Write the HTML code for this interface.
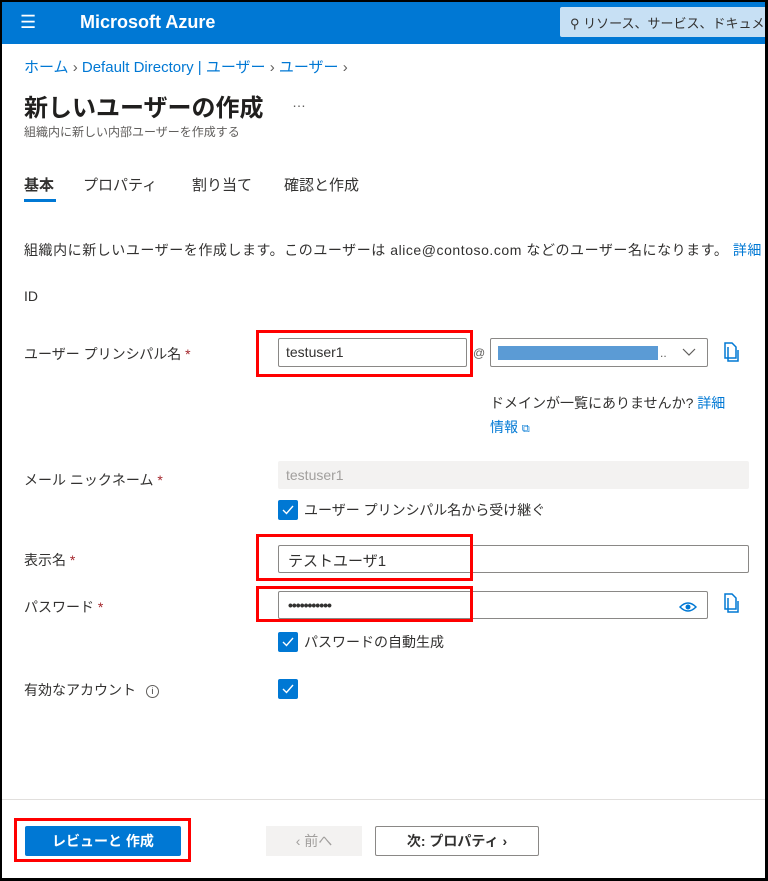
<!DOCTYPE html>
<html><head><meta charset="utf-8"><style>
*{margin:0;padding:0;box-sizing:border-box}
html,body{width:768px;height:881px;overflow:hidden;background:#000}
#p{position:absolute;left:2px;top:2px;width:763px;height:876px;background:#fff;overflow:hidden;font-family:"Liberation Sans","Noto Sans CJK JP",sans-serif;color:#323130}
.a{position:absolute;white-space:nowrap}
.in{position:absolute;border:1px solid #8a8886;border-radius:2px;background:#fff}
.red{position:absolute;border:3px solid #f00}
.cb{position:absolute;width:20px;height:20px;background:#0078d4;border-radius:2px}
.lbl{font-size:14px;color:#323130}
.st{color:#a4262c}
.lk{color:#0078d4}
</style></head><body><div id="p">
<div class="a" style="left:-2px;top:-2px;width:770px;height:44px;background:#0078d4"></div>
<div class="a" style="left:18px;top:10px;color:#fff;font-size:18px">☰</div>
<div class="a" style="left:78px;top:10px;color:#fff;font-size:18px;font-weight:bold">Microsoft Azure</div>
<div class="a" style="left:558px;top:5px;width:210px;height:30px;background:#c7e0f4;border-radius:2px"></div>
<div class="a" style="left:568px;top:11px;font-size:13px;color:#323130">⚲ リソース、サービス、ドキュメント</div>
<div class="a lk" style="left:22px;top:54px;font-size:15px">ホーム <span style="color:#605e5c">›</span> Default Directory | ユーザー <span style="color:#605e5c">›</span> ユーザー <span style="color:#605e5c">›</span></div>
<div class="a" style="left:22px;top:86px;font-size:24px;font-weight:bold;color:#201f1e">新しいユーザーの作成</div>
<div class="a" style="left:290px;top:92px;font-size:14px;color:#605e5c">…</div>
<div class="a" style="left:22px;top:121px;font-size:12px;color:#605e5c">組織内に新しい内部ユーザーを作成する</div>
<div class="a" style="left:22px;top:172px;font-size:15px;font-weight:bold">基本</div>
<div class="a" style="left:81px;top:172px;font-size:15px">プロパティ</div>
<div class="a" style="left:190px;top:172px;font-size:15px">割り当て</div>
<div class="a" style="left:282px;top:172px;font-size:15px">確認と作成</div>
<div class="a" style="left:22px;top:197px;width:32px;height:3px;background:#0078d4"></div>
<div class="a" style="left:22px;top:238px;font-size:14px;letter-spacing:0.55px">組織内に新しいユーザーを作成します。このユーザーは alice@contoso.com などのユーザー名になります。 <span class="lk">詳細</span></div>
<div class="a" style="left:22px;top:286px;font-size:14px">ID</div>
<div class="a lbl" style="left:22px;top:342px">ユーザー プリンシパル名 <span class="st">*</span></div>
<div class="in" style="left:276px;top:336px;width:189px;height:29px"></div>
<div class="a" style="left:284px;top:342px;font-size:14px">testuser1</div>
<div class="red" style="left:254px;top:328px;width:217px;height:47px"></div>
<div class="a" style="left:471px;top:344px;font-size:12px;color:#605e5c">@</div>
<div class="in" style="left:488px;top:336px;width:218px;height:29px"></div>
<div class="a" style="left:496px;top:344px;width:160px;height:14px;background:#5b9bd5"></div>
<div class="a" style="left:658px;top:344px;font-size:12px;color:#605e5c">..</div>
<svg class="a" style="left:680px;top:345px" width="14" height="10"><path d="M1 2l6 6 6-6" fill="none" stroke="#605e5c" stroke-width="1.2"/></svg>
<svg class="a" style="left:720px;top:340px" width="18" height="22"><path d="M3 1h7l4 4v11H3z M6 5v14h10V8" fill="none" stroke="#0078d4" stroke-width="1.5"/></svg>
<div class="a" style="left:488px;top:391px;font-size:14px">ドメインが一覧にありませんか? <span class="lk">詳細</span></div>
<div class="a lk" style="left:488px;top:415px;font-size:14px">情報 <span style="font-size:11px">⧉</span></div>
<div class="a lbl" style="left:22px;top:468px">メール ニックネーム <span class="st">*</span></div>
<div class="a" style="left:276px;top:459px;width:471px;height:28px;background:#f3f2f1;border-radius:2px"></div>
<div class="a" style="left:284px;top:465px;font-size:14px;color:#a19f9d">testuser1</div>
<div class="cb" style="left:276px;top:498px"></div>
<svg class="a" style="left:279px;top:501px" width="14" height="14"><path d="M2 7l3.5 3.5L12 3" fill="none" stroke="#fff" stroke-width="1.4"/></svg>
<div class="a" style="left:302px;top:498px;font-size:14px">ユーザー プリンシパル名から受け継ぐ</div>
<div class="a lbl" style="left:22px;top:548px">表示名 <span class="st">*</span></div>
<div class="in" style="left:276px;top:543px;width:471px;height:28px"></div>
<div class="a" style="left:286px;top:548px;font-size:15px">テストユーザ1</div>
<div class="red" style="left:254px;top:532px;width:217px;height:47px"></div>
<div class="a lbl" style="left:22px;top:595px">パスワード <span class="st">*</span></div>
<div class="in" style="left:276px;top:589px;width:430px;height:28px"></div>
<div class="a" style="left:286px;top:595px;font-size:14px;font-weight:bold;letter-spacing:-1px">•••••••••••</div>
<svg class="a" style="left:677px;top:598px" width="18" height="14"><path d="M1 7Q9 -1 17 7Q9 15 1 7z" fill="none" stroke="#0078d4" stroke-width="1.5"/><circle cx="9" cy="7" r="2.5" fill="#0078d4"/></svg>
<svg class="a" style="left:720px;top:591px" width="18" height="22"><path d="M3 1h7l4 4v11H3z M6 5v14h10V8" fill="none" stroke="#0078d4" stroke-width="1.5"/></svg>
<div class="red" style="left:254px;top:584px;width:217px;height:36px"></div>
<div class="cb" style="left:276px;top:630px"></div>
<svg class="a" style="left:279px;top:633px" width="14" height="14"><path d="M2 7l3.5 3.5L12 3" fill="none" stroke="#fff" stroke-width="1.4"/></svg>
<div class="a" style="left:302px;top:630px;font-size:14px">パスワードの自動生成</div>
<div class="a lbl" style="left:22px;top:678px">有効なアカウント <span style="display:inline-block;width:13px;height:13px;border:1px solid #605e5c;border-radius:50%;font-size:9px;text-align:center;line-height:11px;margin-left:6px;vertical-align:middle">i</span></div>
<div class="cb" style="left:276px;top:677px"></div>
<svg class="a" style="left:279px;top:680px" width="14" height="14"><path d="M2 7l3.5 3.5L12 3" fill="none" stroke="#fff" stroke-width="1.4"/></svg>
<div class="a" style="left:0;top:797px;width:763px;height:1px;background:#e1dfdd"></div>
<div class="a" style="left:23px;top:824px;width:156px;height:30px;background:#0078d4;border-radius:2px;color:#fff;font-size:14px;font-weight:bold;text-align:center;line-height:30px">レビューと 作成</div>
<div class="red" style="left:12px;top:816px;width:177px;height:44px"></div>
<div class="a" style="left:264px;top:824px;width:96px;height:30px;background:#f3f2f1;color:#a19f9d;font-size:14px;text-align:center;line-height:30px">‹ 前へ</div>
<div class="a" style="left:373px;top:824px;width:164px;height:30px;border:1px solid #8a8886;border-radius:2px;font-size:14px;font-weight:bold;text-align:center;line-height:28px">次: プロパティ ›</div>
</div></body></html>
